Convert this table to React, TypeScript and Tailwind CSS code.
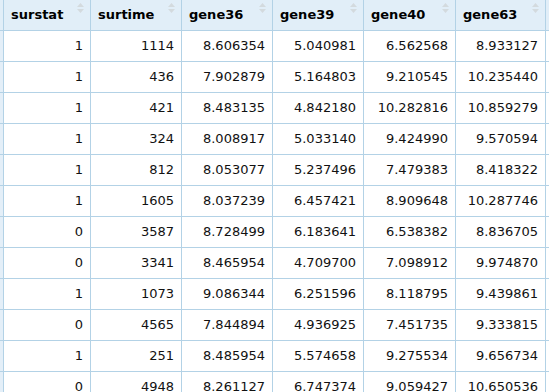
const COLUMNS = ["surstat", "surtime", "gene36", "gene39", "gene40", "gene63"];
const WIDTHS = ["w-[87px]", "w-[91px]", "w-[91px]", "w-[91px]", "w-[92px]", "w-[91px]"];

const ROWS: string[][] = [
  ["1", "1114", "8.606354", "5.040981", "6.562568", "8.933127"],
  ["1", "436", "7.902879", "5.164803", "9.210545", "10.235440"],
  ["1", "421", "8.483135", "4.842180", "10.282816", "10.859279"],
  ["1", "324", "8.008917", "5.033140", "9.424990", "9.570594"],
  ["1", "812", "8.053077", "5.237496", "7.479383", "8.418322"],
  ["1", "1605", "8.037239", "6.457421", "8.909648", "10.287746"],
  ["0", "3587", "8.728499", "6.183641", "6.538382", "8.836705"],
  ["0", "3341", "8.465954", "4.709700", "7.098912", "9.974870"],
  ["1", "1073", "9.086344", "6.251596", "8.118795", "9.439861"],
  ["0", "4565", "7.844894", "4.936925", "7.451735", "9.333815"],
  ["1", "251", "8.485954", "5.574658", "9.275534", "9.656734"],
  ["0", "4948", "8.261127", "6.747374", "9.059427", "10.650536"],
];

function SortIcon() {
  return (
    <svg width="7" height="10" viewBox="0 0 7 10" className="absolute right-[6px] top-[3px]">
      <path d="M3.5 0 L7 4 L0 4 Z" fill="#d3dade" />
      <path d="M3.5 10 L7 6 L0 6 Z" fill="#d3dade" />
    </svg>
  );
}

export default function App() {
  return (
    <div className="w-[549px] h-[392px] overflow-hidden bg-white font-['DejaVu_Sans',sans-serif] text-[13px]">
      {/* header */}
      <div className="flex h-[31px] bg-[#e1eef8] border-b border-[#b3d2e6]">
        <div className="w-[3px]" />
        {COLUMNS.map((c, i) => (
          <div
            key={c}
            className={`${WIDTHS[i]} relative flex items-center pl-[7px] border-l border-[#b3d2e6] font-bold text-black ${
              i === COLUMNS.length - 1 ? "border-r" : ""
            }`}
          >
            {c}
            <SortIcon />
          </div>
        ))}
      </div>

      {/* body */}
      {ROWS.map((row, r) => (
        <div key={r} className="flex h-[31px] border-b border-[#b3d2e6]">
          <div className="w-[3px] bg-[#e4eff8]" />
          {row.map((v, i) => (
            <div
              key={i}
              className={`${WIDTHS[i]} flex items-center justify-end pr-[7px] border-l border-[#b3d2e6] text-[#111] ${
                i === row.length - 1 ? "border-r" : ""
              }`}
            >
              {v}
            </div>
          ))}
        </div>
      ))}
    </div>
  );
}
